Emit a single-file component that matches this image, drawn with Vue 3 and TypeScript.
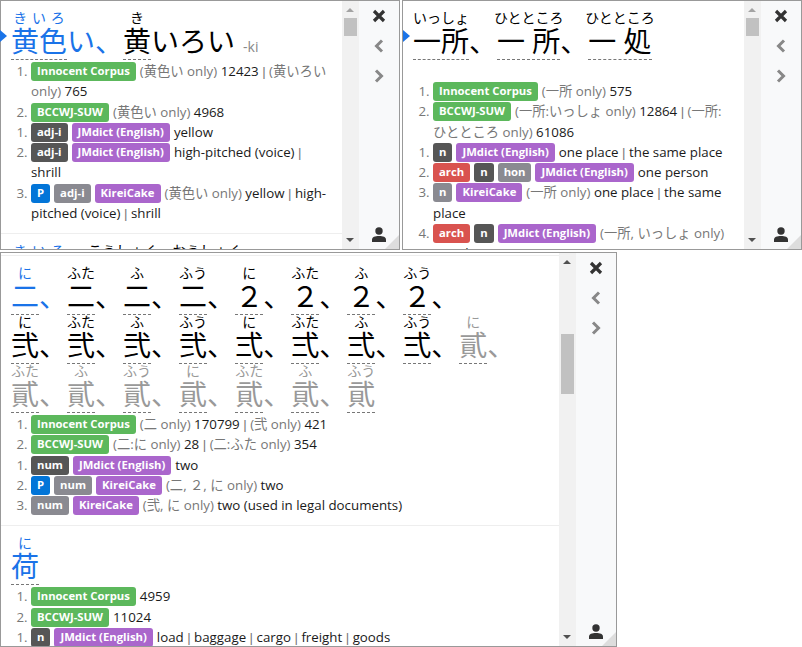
<script setup lang="ts">
type Word = { base: string; ruby: string; tail?: string; tone?: string }
type Seg = [string, string?]
type Tag = [string, string]
type Row = { tags: Tag[]; segs: Seg[] }
type Entry = { rows: Word[][]; suffix?: string; gap?: boolean; lists: Row[][] }
type Win = { cls: string; arrow: boolean; lead: boolean; entries: Entry[] }

const m = 'muted'
const wide2 = '\uFF12'
const inno: Tag = ['Innocent Corpus', 'freq']
const bccwj: Tag = ['BCCWJ-SUW', 'freq']
const jm: Tag = ['JMdict (English)', 'dict']
const kc: Tag = ['KireiCake', 'dict']
const pos = (t: string): Tag => [t, 'pos']
const def = (t: string): Tag => [t, 'def']
const pop: Tag = ['P', 'pop']
const arch: Tag = ['arch', 'arch']
const pipe: Seg = ['|', 'pipe']

const kinds = ['に', 'ふた', 'ふ', 'ふう']
const series = (base: string, tone: string, readings: string[], last = false): Word[] =>
  readings.map((ruby, i) => ({
    base,
    ruby,
    tone,
    tail: last && i === readings.length - 1 ? '' : '、',
  }))

const windows: Win[] = [
  {
    cls: 'w-one',
    arrow: true,
    lead: false,
    entries: [
      {
        rows: [
          [
            { base: '黄色', ruby: 'きいろ', tail: 'い、', tone: 'primary' },
            { base: '黄', ruby: 'き', tail: 'いろい' },
          ],
        ],
        suffix: '-ki',
        lists: [
          [
            { tags: [inno], segs: [['(黄色い only)', m], ['12423'], pipe, ['(黄いろい only)', m], ['765']] },
            { tags: [bccwj], segs: [['(黄色い only)', m], ['4968']] },
          ],
          [
            { tags: [pos('adj-i'), jm], segs: [['yellow']] },
            { tags: [pos('adj-i'), jm], segs: [['high-pitched (voice)'], pipe, ['shrill']] },
            { tags: [pop, def('adj-i'), kc], segs: [['(黄色い only)', m], ['yellow'], pipe, ['high-pitched (voice)'], pipe, ['shrill']] },
          ],
        ],
      },
      {
        rows: [
          [
            { base: '黄色', ruby: 'きいろ', tail: '、', tone: 'primary' },
            { base: '黄色', ruby: 'こうしょく', tail: '、' },
            { base: '黄色', ruby: 'おうしょく', tail: '' },
          ],
        ],
        lists: [],
      },
    ],
  },
  {
    cls: 'w-two',
    arrow: true,
    lead: false,
    entries: [
      {
        rows: [
          [
            { base: '一所', ruby: 'いっしょ', tail: '、' },
            { base: '一 所', ruby: 'ひとところ', tail: '、' },
            { base: '一 処', ruby: 'ひとところ', tail: '' },
          ],
        ],
        gap: true,
        lists: [
          [
            { tags: [inno], segs: [['(一所 only)', m], ['575']] },
            { tags: [bccwj], segs: [['(一所:いっしょ only)', m], ['12864'], pipe, ['(一所:ひとところ only)', m], ['61086']] },
          ],
          [
            { tags: [pos('n'), jm], segs: [['one place'], pipe, ['the same place']] },
            { tags: [arch, pos('n'), def('hon'), jm], segs: [['one person']] },
            { tags: [def('n'), kc], segs: [['(一所 only)', m], ['one place'], pipe, ['the same place']] },
            { tags: [arch, pos('n'), jm], segs: [['(一所, いっしょ only)', m], ['together']] },
          ],
        ],
      },
    ],
  },
  {
    cls: 'w-three',
    arrow: false,
    lead: true,
    entries: [
      {
        rows: [
          [...series('二', 'primary', ['に']), ...series('二', '', kinds.slice(1)), ...series(wide2, '', kinds)],
          [...series('弐', '', kinds), ...series('弍', '', kinds), ...series('貳', 'faded', ['に'])],
          [...series('貳', 'faded', kinds.slice(1)), ...series('貮', 'faded', kinds, true)],
        ],
        lists: [
          [
            { tags: [inno], segs: [['(二 only)', m], ['170799'], pipe, ['(弐 only)', m], ['421']] },
            { tags: [bccwj], segs: [['(二:に only)', m], ['28'], pipe, ['(二:ふた only)', m], ['354']] },
          ],
          [
            { tags: [pos('num'), jm], segs: [['two']] },
            { tags: [pop, def('num'), kc], segs: [[`(二, ${wide2}, に only)`, m], ['two']] },
            { tags: [def('num'), kc], segs: [['(弐, に only)', m], ['two (used in legal documents)']] },
          ],
        ],
      },
      {
        rows: [[{ base: '荷', ruby: 'に', tail: '', tone: 'primary' }]],
        lists: [
          [
            { tags: [inno], segs: [['4959']] },
            { tags: [bccwj], segs: [['11024']] },
          ],
          [
            { tags: [pos('n'), jm], segs: [['load'], pipe, ['baggage'], pipe, ['cargo'], pipe, ['freight'], pipe, ['goods']] },
          ],
        ],
      },
    ],
  },
]
</script>

<template>
  <div class="desk">
    <div class="top">
      <section v-for="w in windows.slice(0, 2)" :key="w.cls" class="win" :class="w.cls">
        <span v-if="w.arrow" class="pointer"></span>
        <div class="body">
          <article v-for="(e, ei) in w.entries" :key="ei" class="entry">
            <div class="expr" :class="{ spaced: e.gap }">
              <div v-for="(row, ri) in e.rows" :key="ri" class="line">
                <span v-for="(word, wi) in row" :key="wi" :class="word.tone"><ruby><span class="rb">{{ word.base }}</span><rt>{{ word.ruby }}</rt></ruby>{{ word.tail }}</span>
                <span v-if="e.suffix" class="suffix">{{ e.suffix }}</span>
              </div>
            </div>
            <ol v-for="(list, li) in e.lists" :key="li">
              <li v-for="(r, ri) in list" :key="ri">
                <span v-for="t in r.tags" :key="t[0]" class="tag" :class="t[1]">{{ t[0] }}</span>
                <template v-for="(s, si) in r.segs" :key="si"><span :class="s[1]">{{ s[0] }}</span>{{ ' ' }}</template>
              </li>
            </ol>
          </article>
        </div>
        <div class="track">
          <i class="up dim"></i>
          <b class="thumb"></b>
          <i class="down"></i>
        </div>
        <nav class="side">
          <button class="btn"><svg width="14" height="14" viewBox="0 0 14 14"><path d="M2 2 12 12M12 2 2 12" class="x" /></svg></button>
          <button class="btn"><svg width="10" height="14" viewBox="0 0 10 14"><path d="M8 1.500 2.500 7 8 12.500" class="chev" /></svg></button>
          <button class="btn"><svg width="10" height="14" viewBox="0 0 10 14"><path d="M2 1.500 7.500 7 2 12.500" class="chev" /></svg></button>
          <span class="fill"></span>
          <button class="btn"><svg width="16" height="15" viewBox="0 0 16 15"><circle cx="8" cy="4" r="3.7" class="me" /><path d="M1 15v-2.500C1 10 4 9 8 9s7 1 7 3.500V15z" class="me" /></svg></button>
        </nav>
        <span class="grip"></span>
      </section>
    </div>
    <section v-for="w in windows.slice(2)" :key="w.cls" class="win" :class="w.cls">
      <div class="body">
        <hr class="lead" />
        <article v-for="(e, ei) in w.entries" :key="ei" class="entry">
          <div class="expr">
            <div v-for="(row, ri) in e.rows" :key="ri" class="line">
              <span v-for="(word, wi) in row" :key="wi" :class="word.tone"><ruby><span class="rb">{{ word.base }}</span><rt>{{ word.ruby }}</rt></ruby>{{ word.tail }}</span>
            </div>
          </div>
          <ol v-for="(list, li) in e.lists" :key="li">
            <li v-for="(r, ri) in list" :key="ri">
              <span v-for="t in r.tags" :key="t[0]" class="tag" :class="t[1]">{{ t[0] }}</span>
              <template v-for="(s, si) in r.segs" :key="si"><span :class="s[1]">{{ s[0] }}</span>{{ ' ' }}</template>
            </li>
          </ol>
        </article>
      </div>
      <div class="track">
        <i class="up"></i>
        <b class="thumb"></b>
        <i class="down"></i>
      </div>
      <nav class="side">
        <button class="btn"><svg width="14" height="14" viewBox="0 0 14 14"><path d="M2 2 12 12M12 2 2 12" class="x" /></svg></button>
        <button class="btn"><svg width="10" height="14" viewBox="0 0 10 14"><path d="M8 1.500 2.500 7 8 12.500" class="chev" /></svg></button>
        <button class="btn"><svg width="10" height="14" viewBox="0 0 10 14"><path d="M2 1.500 7.500 7 2 12.500" class="chev" /></svg></button>
        <span class="fill"></span>
        <button class="btn"><svg width="16" height="15" viewBox="0 0 16 15"><circle cx="8" cy="4" r="3.7" class="me" /><path d="M1 15v-2.500C1 10 4 9 8 9s7 1 7 3.500V15z" class="me" /></svg></button>
      </nav>
      <span class="grip"></span>
    </section>
  </div>
</template>

<style scoped>
.desk {
  width: 802px;
  height: 647px;
  display: flex;
  flex-direction: column;
  gap: 2px;
  overflow: hidden;
  background: #fff;
  font-family: "Open Sans", "Noto Sans CJK JP", sans-serif;
  font-size: 13.3px;
  line-height: 20.25px;
  color: #1a1a1a;
}
.top {
  display: flex;
  gap: 2px;
}
.win {
  position: relative;
  display: flex;
  box-sizing: border-box;
  border: 1px solid #999;
  background: #fff;
}
.w-one,
.w-two {
  width: 400px;
  height: 250px;
}
.w-three {
  width: 617px;
  height: 395px;
}
.pointer {
  position: absolute;
  left: 0;
  top: 29px;
  border-left: 7px solid #1a73e8;
  border-top: 6px solid transparent;
  border-bottom: 6px solid transparent;
}
.w-one .pointer {
  left: -1px;
}
.body {
  flex: 1;
  min-width: 0;
  overflow: hidden;
}
.lead {
  margin: 2px 0 0;
  border: 0;
  border-top: 1px solid #eee;
}
.entry {
  padding: 6px 10px 10px;
  border-bottom: 1px solid #eee;
}
.expr {
  font-size: 28px;
  margin-bottom: 5px;
}
.spaced {
  margin-bottom: 25px;
}
.line {
  height: 49px;
  line-height: 49px;
  white-space: nowrap;
  color: #000;
}
ruby {
  ruby-position: over;
}
.rb {
  display: inline-block;
  line-height: 26px;
  height: 32px;
  border-bottom: 1px dashed #777;
  box-sizing: border-box;
}
rt {
  position: relative;
  top: 3px;
  font-size: 14px;
  line-height: 4px;
}
.primary {
  color: #1a73e8;
}
.faded {
  color: #999;
}
.suffix {
  font-size: 14px;
  line-height: 14px;
  color: #888;
  margin-left: 8px;
}
ol {
  margin: 0;
  padding: 0 0 0 20px;
}
li::marker {
  color: #777;
}
.muted {
  color: #777;
}
.pipe {
  color: #777;
  font-family: "Liberation Sans", sans-serif;
  line-height: 14px;
}
.tag {
  display: inline-block;
  margin: -1px 4px -1px 0;
  padding: 3px 6px 4px;
  border-radius: 3px;
  font-size: 11.3px;
  font-weight: 700;
  line-height: 12px;
  color: #fff;
  vertical-align: 1px;
}
.freq {
  background: #5cb85c;
}
.dict {
  background: #aa66cc;
}
.pos {
  background: #565656;
}
.def {
  background: #8a8a91;
}
.pop {
  background: #0275d8;
}
.arch {
  background: #d9534f;
}
.track {
  position: relative;
  flex: none;
  width: 17px;
  background: #f1f1f1;
}
.thumb {
  position: absolute;
  left: 2px;
  width: 13px;
  top: 17px;
  height: 18px;
  background: #c1c1c1;
}
.w-three .thumb {
  top: 81px;
  height: 60px;
}
.up,
.down {
  position: absolute;
  left: 4px;
  border-left: 4px solid transparent;
  border-right: 4px solid transparent;
}
.up {
  top: 7px;
  border-bottom: 4px solid #505050;
}
.up.dim {
  border-bottom-color: #a3a3a3;
}
.down {
  bottom: 7px;
  border-top: 4px solid #505050;
}
.side {
  flex: none;
  width: 40px;
  display: flex;
  flex-direction: column;
  background: #f8f9fa;
}
.fill {
  flex: 1;
}
.btn {
  height: 30px;
  padding: 0;
  border: 0;
  background: none;
  display: flex;
  align-items: center;
  justify-content: center;
}
.x {
  fill: none;
  stroke: #333;
  stroke-width: 3.2;
}
.chev {
  fill: none;
  stroke: #888;
  stroke-width: 3;
}
.me {
  fill: #333;
}
.grip {
  position: absolute;
  right: 0;
  bottom: 0;
  width: 14px;
  height: 14px;
  background: #ddd;
  clip-path: polygon(100% 0, 100% 100%, 0 100%);
}
</style>

<style>
html,
body {
  background: #fff;
}
</style>
